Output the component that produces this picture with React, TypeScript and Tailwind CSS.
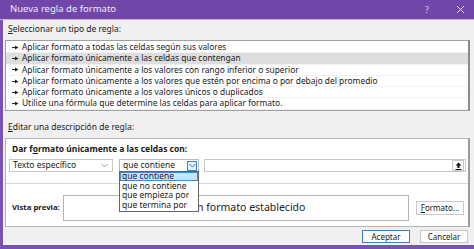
import React from "react";

const Arrow = () => (
  <svg width="7" height="5" viewBox="0 0 7 5" className="mr-[3px] shrink-0">
    <path d="M0 2.5 H3" stroke="#222" strokeWidth="1" />
    <path d="M3 0.5 L6.5 2.5 L3 4.5 Z" fill="#222" />
  </svg>
);

const rules = [
  "Aplicar formato a todas las celdas según sus valores",
  "Aplicar formato únicamente a las celdas que contengan",
  "Aplicar formato únicamente a los valores con rango inferior o superior",
  "Aplicar formato únicamente a los valores que estén por encima o por debajo del promedio",
  "Aplicar formato únicamente a los valores únicos o duplicados",
  "Utilice una fórmula que determine las celdas para aplicar formato.",
];

const Chevron = ({ color = "#888" }: { color?: string }) => (
  <svg width="7" height="5" viewBox="0 0 7 5">
    <path d="M0.5 1 L3.5 4 L6.5 1" stroke={color} strokeWidth="1" fill="none" />
  </svg>
);

export default function App() {
  return (
    <div
      className="w-[474px] h-[249px] overflow-hidden flex flex-col bg-[#7a52b0] text-[#1a1a1a]"
      style={{ fontFamily: '"Noto Sans", "Open Sans", sans-serif' }}
    >
      {/* title bar */}
      <div className="h-[19px] shrink-0 flex items-center bg-[#7047a8] pl-[10px] pr-[9px] text-[9.5px] text-[#efe7fa]">
        <span>Nueva regla de formato</span>
        <span className="ml-auto mr-[27px] text-[9px] text-[#d9c9ee]">?</span>
        <svg width="9" height="9" viewBox="0 0 9 9">
          <path d="M1 1 L8 8 M8 1 L1 8" stroke="#e6dcf3" strokeWidth="1" />
        </svg>
      </div>
      <div className="h-px bg-[#c6b2e2] shrink-0" />
      <div className="flex-1 flex flex-col ml-[3px] mb-[4px] bg-[#f0f0f0] pl-[2px] pr-0">
        <div className="h-[18px] flex items-end pl-[3px] pb-[2px] text-[8.5px]">
          <span>
            <span className="underline">S</span>eleccionar un tipo de regla:
          </span>
        </div>
        <div className="h-[71px] mr-[4px] mt-[2px] bg-white border border-[#a0a0a0] border-r-[2px] border-r-[#8a8a8a] pt-[1px] flex flex-col">
          {rules.map((r, i) => (
            <div
              key={i}
              className={
                "h-[11.3px] flex items-center pl-[6px] text-[8.4px] leading-none border-b border-[#f0f0f0] " +
                (i === 1 ? "bg-[#dedede]" : "")
              }
            >
              <Arrow />
              <span className="whitespace-nowrap">{r}</span>
            </div>
          ))}
        </div>
        <div className="h-[27px] flex items-end pl-[3px] pb-[4px] text-[8.5px]">
          <span>
            <span className="underline">E</span>ditar una descripción de regla:
          </span>
        </div>
        <div className="h-[89px] mr-[4px] bg-white border border-[#b4b4b4] border-r-[2px] border-r-[#9a9a9a] flex flex-col relative">
          <div className="h-[19px] flex items-end pl-[6px] pb-[2px] text-[8.5px] font-bold">
            <span>
              Dar f<span className="underline">o</span>rmato únicamente a las celdas con:
            </span>
          </div>
          <div className="flex items-center h-[13px] mt-[1px] pl-[3px] text-[8.5px]">
            <div className="w-[104px] h-[13px] border border-[#c8c8c8] flex items-center pl-[3px]">
              <span>Texto específico</span>
              <div className="ml-auto mr-[3px] w-[10px] h-[10px] flex items-center justify-center">
                <Chevron color="#9a9a9a" />
              </div>
            </div>
            <div className="ml-[6px] w-[80px] h-[13px] border border-[#bcbcbc] flex items-center pl-[3px] relative">
              <span>que contiene</span>
              <div className="ml-auto mr-[1px] w-[10px] h-[10px] border border-[#3c7fd1] bg-[#e5f1fb] flex items-center justify-center">
                <Chevron color="#3c6fb0" />
              </div>
              <div className="absolute left-[-1px] top-[11px] w-[80px] bg-white border border-[#646464] text-[8.5px] leading-none pb-[1px] z-10">
                <div className="h-[9px] flex items-center pl-[1px] bg-[#cce4f7] border border-[#3f8ad6]">que contiene</div>
                <div className="h-[9.5px] flex items-center pl-[2px]">que no contiene</div>
                <div className="h-[9.5px] flex items-center pl-[2px]">que empieza por</div>
                <div className="h-[9.5px] flex items-center pl-[2px]">que termina por</div>
              </div>
            </div>
            <div className="ml-[5px] w-[262px] h-[13px] border border-[#c8c8c8] flex items-center justify-end pr-[1px]">
              <div className="w-[12px] h-[11px] border border-[#c8c8c8] bg-white flex items-center justify-center">
                <svg width="7" height="8" viewBox="0 0 7 8">
                  <path d="M3.5 0.5 L6.5 3.5 H4.5 V6 H2.5 V3.5 H0.5 Z" fill="#111" />
                  <path d="M0.5 7.5 H6.5" stroke="#111" strokeWidth="1" />
                </svg>
              </div>
            </div>
          </div>
          <div className="h-px bg-[#d8d8d8] mt-[11px]" />
          <div className="flex items-center mt-[11px] pl-[6px] text-[8.5px]">
            <span className="font-bold w-[51px] text-[7.8px] whitespace-nowrap">Vista previa:</span>
            <div className="w-[346px] h-[26px] border border-[#b4b4b4] flex items-center justify-center pl-[22px] text-[10.5px] text-[#222]">
              Sin formato establecido
            </div>
            <div className="ml-[7px] w-[48px] h-[14px] border border-[#c8c8c8] bg-[#fdfdfd] flex items-center justify-center text-[8px]">
              <span>
                <span className="underline">F</span>ormato...
              </span>
            </div>
          </div>
        </div>
        <div className="flex justify-end items-center gap-[10px] mt-[3px] mr-[6px] text-[8px]">
          <div className="w-[48px] h-[13px] border border-[#3a7fd0] bg-[#fdfdfd] flex items-center justify-center">Aceptar</div>
          <div className="w-[48px] h-[13px] border border-[#c8c8c8] bg-[#fdfdfd] flex items-center justify-center">Cancelar</div>
        </div>
      </div>
    </div>
  );
}
